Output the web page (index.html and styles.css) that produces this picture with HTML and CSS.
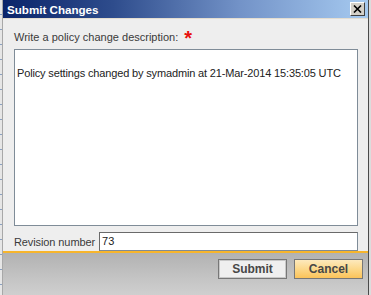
FILE: index.html
```html
<!DOCTYPE html>
<html>
<head>
<meta charset="utf-8">
<link rel="stylesheet" href="styles.css">
</head>
<body>
<div class="page">
  <div class="strip-left"></div>
  <div class="dialog">
    <div class="titlebar">
      <span class="title">Submit Changes</span>
      <span class="close">
        <svg width="9" height="8" viewBox="0 0 9 8"><path d="M1 0.5 L8 7.5 M8 0.5 L1 7.5" stroke="#000" stroke-width="1.6"/></svg>
      </span>
    </div>
    <div class="content">
      <div class="label">Write a policy change description: <span class="req">*</span></div>
      <div class="textarea">Policy settings changed by symadmin at 21-Mar-2014 15:35:05 UTC</div>
      <div class="rev-row">
        <span class="rev-label">Revision number</span>
        <div class="input">73</div>
      </div>
    </div>
    <div class="footer">
      <button class="btn">Submit</button>
      <button class="btn btn-cancel">Cancel</button>
    </div>
  </div>
  <div class="strip-right"></div>
</div>
</body>
</html>
```
FILE: styles.css
```css
html, body {
  margin: 0;
  padding: 0;
}
body {
  background: #ececec;
  font-family: "Liberation Sans", Arial, sans-serif;
  font-size: 11px;
  color: #333;
}
.page {
  display: flex;
  width: 371px;
  height: 295px;
  overflow: hidden;
}
.strip-left {
  width: 2px;
  border-right: 1px solid #a8a8a8;
  background: repeating-linear-gradient(to bottom, #e6e6e6 0, #e6e6e6 14px, #8aa0c0 14px, #8aa0c0 15px);
}
.strip-right {
  width: 2px;
  background: #dcdcdc;
}
.dialog {
  width: 365px;
  border-right: 1px solid #4a4a4a;
  background: #eeeeee;
  display: flex;
  flex-direction: column;
}
.titlebar {
  height: 18px;
  background: linear-gradient(to right, #0a246a 0%, #2e4c8c 30%, #7393c8 65%, #a6caf0 100%);
  display: flex;
  align-items: center;
  justify-content: space-between;
  padding: 0 3px 0 4px;
  border-bottom: 1px solid #e4ddd0;
}
.title {
  color: #fff;
  font-weight: bold;
  font-size: 11.6px;
}
.close {
  width: 13px;
  height: 12px;
  background: #d4d0c8;
  border-top: 1px solid #fff;
  border-left: 1px solid #fff;
  border-right: 1px solid #404040;
  border-bottom: 1px solid #404040;
  display: flex;
  align-items: center;
  justify-content: center;
}
.close svg { display: block; }
.content {
  padding: 11px 10px 0 11px;
  display: flex;
  flex-direction: column;
  height: 234px;
  box-sizing: border-box;
  border-bottom: 2px solid #f7b52c;
}
.label {
  height: 14px;
  line-height: 14px;
  font-size: 11px;
  color: #3a3a3a;
  margin-bottom: 5px;
}
.req {
  color: #e8100c;
  font-weight: bold;
  font-size: 20px;
  line-height: 10px;
  vertical-align: -4px;
  margin-left: 3px;
}
.textarea {
  border: 1px solid #7f8c98;
  background: #fff;
  padding: 17px 2px 0 2px;
  box-sizing: border-box;
  height: 178px;
  color: #222;
  font-size: 11px;
  letter-spacing: -0.15px;
  line-height: 13px;
}
.rev-row {
  margin-top: 6px;
  display: flex;
  align-items: center;
  gap: 4px;
}
.rev-label {
  font-size: 11px;
  letter-spacing: -0.1px;
  color: #3a3a3a;
}
.input {
  flex: 1;
  height: 19px;
  box-sizing: border-box;
  border: 1px solid #7f8c98;
  border-top-color: #6a6a6a;
  border-left-color: #6a6a6a;
  background: #fff;
  padding: 0 2px;
  line-height: 17px;
  font-size: 11px;
  color: #222;
}
.footer {
  flex: 1;
  background: linear-gradient(to bottom, #b2b2b2 0%, #c4c4c4 60%, #cfcfcf 100%);
  display: flex;
  justify-content: flex-end;
  align-items: flex-start;
  padding: 6px 5px 0 0;
  gap: 7px;
}
.btn {
  width: 69px;
  height: 20px;
  box-sizing: border-box;
  border: 1px solid #777;
  background: #efefef;
  font-family: "Liberation Sans", Arial, sans-serif;
  font-weight: bold;
  font-size: 12px;
  color: #474747;
  padding: 0;
  margin: 0;
  box-shadow: inset 0 0 0 1px #c8c8c8;
}
.btn-cancel {
  background: linear-gradient(to bottom, #fde9bd 0%, #fcd88a 50%, #fbc35a 100%);
  box-shadow: none;
}
```
